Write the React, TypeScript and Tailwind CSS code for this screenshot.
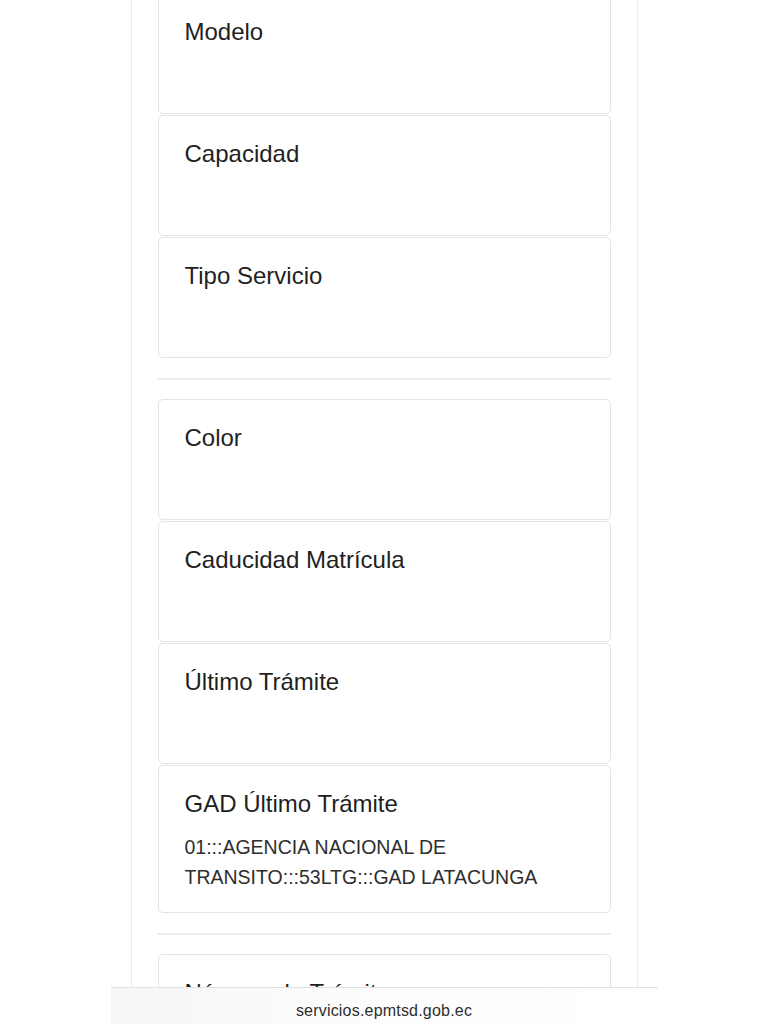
const fields: { label: string; value?: string }[][] = [
  [{ label: "Modelo" }, { label: "Capacidad" }, { label: "Tipo Servicio" }],
  [
    { label: "Color" },
    { label: "Caducidad Matrícula" },
    { label: "Último Trámite" },
    {
      label: "GAD Último Trámite",
      value: "01:::AGENCIA NACIONAL DE TRANSITO:::53LTG:::GAD LATACUNGA",
    },
  ],
  [{ label: "Número de Trámite" }],
];

function FieldCard({ label, value }: { label: string; value?: string }) {
  return (
    <div className="min-h-[121px] rounded-[5px] border border-[#e4e4e4] bg-white pl-[26px] pr-[20px] pt-[23px] pb-[20px]">
      <div className="text-[24px] leading-[29px] text-[#1f1f1f]">{label}</div>
      {value && (
        <div className="mt-[14px] text-[19.5px] leading-[30px] text-[#2e2e2e]">{value}</div>
      )}
    </div>
  );
}

export default function App() {
  return (
    <div
      className="relative h-[1024px] w-[768px] overflow-hidden bg-white"
      style={{ fontFamily: "'Liberation Sans', Arial, sans-serif" }}
    >
      <div className="mx-auto h-full w-[507px] border-x border-[#ebebeb] px-[26px]">
        <div className="-mt-[7px] flex flex-col">
          {fields.map((group, gi) => (
            <div key={gi} className="flex flex-col">
              {gi > 0 && <div className="mt-[20px] mb-[19px] h-[2px] bg-[#ececec]" />}
              <div className="flex flex-col gap-[1px]">
                {group.map((f) => (
                  <FieldCard key={f.label} label={f.label} value={f.value} />
                ))}
              </div>
            </div>
          ))}
        </div>
      </div>

      <div className="absolute bottom-0 left-0 right-0 h-[37px] bg-white">
        <div className="mx-auto flex h-full w-[547px] justify-center border-t border-[#e2e2e2] bg-gradient-to-r from-[#f6f6f6] via-[#fdfdfd] to-white pt-[13px]">
          <span className="text-[16px] leading-[20px] tracking-[0.2px] text-[#2e2e2e]">
            servicios.epmtsd.gob.ec
          </span>
        </div>
      </div>
    </div>
  );
}
